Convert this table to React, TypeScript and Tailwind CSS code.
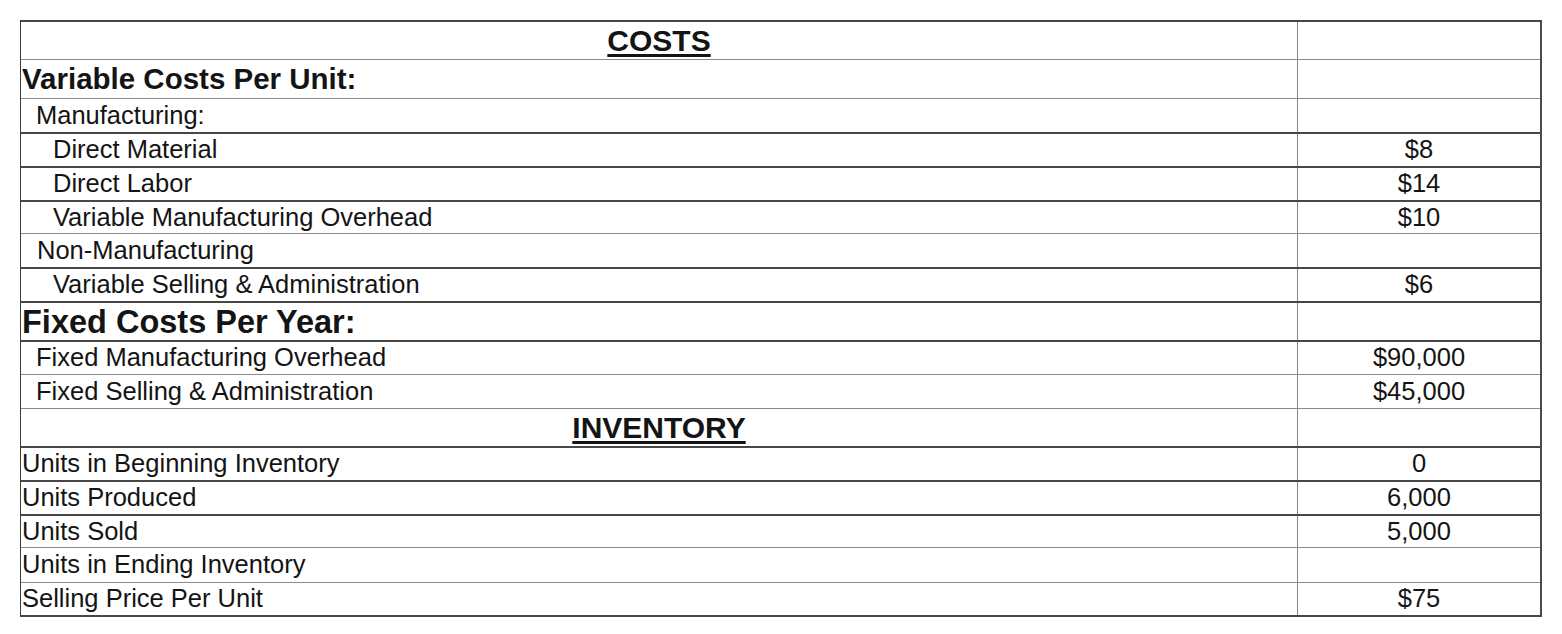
import React from "react";

type Row = {
  h: number;
  label?: string;
  indent?: number;
  value?: string;
  kind?: "title" | "bold" | "bold2" | "normal";
  dark: boolean;
};

const rows: Row[] = [
  { h: 39, label: "COSTS", kind: "title", dark: true },
  { h: 39, label: "Variable Costs Per Unit:", kind: "bold", dark: false },
  { h: 34, label: "Manufacturing:", indent: 14, dark: false },
  { h: 34, label: "Direct Material", indent: 31, value: "$8", dark: true },
  { h: 34, label: "Direct Labor", indent: 31, value: "$14", dark: true },
  { h: 33, label: "Variable Manufacturing Overhead", indent: 31, value: "$10", dark: true },
  { h: 34, label: "Non-Manufacturing", indent: 15, dark: false },
  { h: 34, label: "Variable Selling & Administration", indent: 31, value: "$6", dark: true },
  { h: 39, label: "Fixed Costs Per Year:", kind: "bold2", dark: true },
  { h: 34, label: "Fixed Manufacturing Overhead", indent: 14, value: "$90,000", dark: true },
  { h: 34, label: "Fixed Selling & Administration", indent: 14, value: "$45,000", dark: false },
  { h: 38, label: "INVENTORY", kind: "title", dark: false },
  { h: 34, label: "Units in Beginning Inventory", indent: 0, value: "0", dark: true },
  { h: 34, label: "Units Produced", indent: 0, value: "6,000", dark: true },
  { h: 33, label: "Units Sold", indent: 0, value: "5,000", dark: true },
  { h: 35, label: "Units in Ending Inventory", indent: 0, dark: false },
  { h: 33, label: "Selling Price Per Unit", indent: 0, value: "$75", dark: false },
];

export default function App() {
  return (
    <div className="w-[1562px] h-[634px] bg-white pt-[20px] pl-[20px]" style={{ fontFamily: '"Liberation Sans", Arial, sans-serif' }}>
      <div className="w-[1522px] border-l-[1.5px] border-l-[#3c3c3c] border-r-2 border-r-[#4a4a4a] border-b-2 border-b-[#474747] text-[#141414]">
        {rows.map((r, i) => (
          <div
            key={i}
            className={
              "flex " + (r.dark ? "border-t-2 border-t-[#474747]" : "border-t border-t-[#8a8a8a]")
            }
            style={{ height: r.h }}
          >
            <div className="w-[1276px] flex items-center overflow-hidden whitespace-nowrap">
              {r.kind === "title" ? (
                <div className="w-full text-center font-bold text-[30px] underline decoration-[2.5px] underline-offset-[3px] leading-none">
                  {r.label}
                </div>
              ) : r.kind === "bold" ? (
                <div className="font-bold text-[29.5px] leading-none pl-[1px]">{r.label}</div>
              ) : r.kind === "bold2" ? (
                <div className="font-bold text-[32.5px] leading-none pl-[1px] pt-[1px]">{r.label}</div>
              ) : (
                <div className="text-[25.5px] leading-none" style={{ paddingLeft: (r.indent ?? 0) + 1 }}>
                  {r.label}
                </div>
              )}
            </div>
            <div className="flex-1 border-l border-l-[#858585] flex items-center justify-center text-[25.5px] leading-none">
              {r.value}
            </div>
          </div>
        ))}
      </div>
    </div>
  );
}
